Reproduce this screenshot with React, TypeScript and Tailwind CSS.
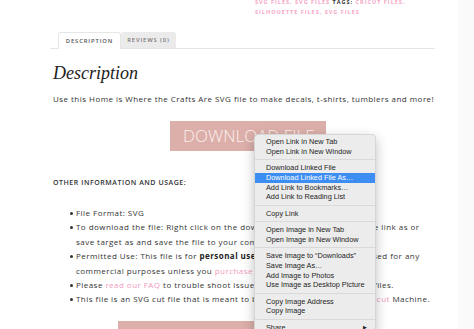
import React from 'react';

const menuItems: (string | null)[] = [
  'Open Link in New Tab',
  'Open Link in New Window',
  null,
  'Download Linked File',
  'Download Linked File As…',
  'Add Link to Bookmarks…',
  'Add Link to Reading List',
  null,
  'Copy Link',
  null,
  'Open Image in New Tab',
  'Open Image in New Window',
  null,
  'Save Image to “Downloads”',
  'Save Image As…',
  'Add Image to Photos',
  'Use Image as Desktop Picture',
  null,
  'Copy Image Address',
  'Copy Image',
  null,
  'Share',
];

const Bullet: React.FC<{ children: React.ReactNode }> = ({ children }) => (
  <li className="flex">
    <span className="w-[23px] shrink-0 flex justify-end pr-[3px] pt-[6px]">
      <span className="w-[3px] h-[3px] rounded-full bg-[#333]" />
    </span>
    <span className="whitespace-nowrap">{children}</span>
  </li>
);

const ContextMenu: React.FC = () => (
  <div className="absolute left-[254px] top-[134px] w-[122px] pt-[2px] pb-[4px] rounded-[4px] bg-[#ececec] border border-[#d6d6d6] shadow-[0_4px_12px_rgba(0,0,0,0.25)] font-['Liberation_Sans',Arial,sans-serif] text-[7.3px] text-[#1e1e1e]">
    {menuItems.map((item, i) =>
      item === null ? (
        <div key={i} className="my-[2.8px] h-px bg-[#d9d9d9]" />
      ) : (
        <div
          key={i}
          className={
            'h-[9.75px] leading-[9.75px] pl-[11px] pr-[8px] flex justify-between whitespace-nowrap ' +
            (item === 'Download Linked File As…' ? 'bg-[#3d8ef2] text-white' : '')
          }
        >
          <span>{item}</span>
          {item === 'Share' && <span className="text-[5px]">▶</span>}
        </div>
      )
    )}
  </div>
);

export default function App() {
  return (
    <div className="relative flex w-[474px] h-[329px] overflow-hidden bg-white text-[#333] font-['Open_Sans',sans-serif]">
      <div className="w-[458px] shrink-0 pl-[50px]">
        <div className="ml-[205px] -mt-[3px] text-[5.5px] font-bold tracking-[1px] leading-[10px] uppercase text-[#f4a6c6]">
          <div>
            SVG Files, SVG Files <span className="text-[#333]">Tags:</span> Cricut Files,
          </div>
          <div>Silhouette Files, SVG Files</div>
        </div>

        <div className="mt-[15px] w-[385px] h-[17px] flex items-end pl-[8px] border-b border-[#e6e6e6] text-[5.8px] font-semibold tracking-[0.9px] uppercase">
          <div className="h-[17px] -mb-px w-[63px] flex items-center justify-center bg-white border border-b-0 border-[#e6e6e6] rounded-t-[3px] text-[#555]">
            Description
          </div>
          <div className="h-[16px] w-[55px] flex items-center justify-center bg-[#ebebeb] rounded-t-[3px] text-[#777]">
            Reviews (0)
          </div>
        </div>

        <div className="pl-[3px]">
          <h2 className="mt-[15px] text-[18px] leading-[18px] italic font-['Liberation_Serif',serif] text-[#222]">
            Description
          </h2>

          <p className="mt-[10px] text-[8px] leading-[14px] font-medium tracking-[0.46px] whitespace-nowrap">
            Use this Home is Where the Crafts Are SVG file to make decals, t-shirts, tumblers and more!
          </p>

          <div className="mt-[15px] ml-[117px] w-[156px] h-[30px] bg-[#dcafaa] flex items-center pl-[13px] text-[17px] font-light text-[#fbefee] whitespace-nowrap">
            DOWNLOAD FILE
          </div>

          <p className="mt-[25px] text-[7px] leading-[14px] font-semibold tracking-[0.55px] uppercase">
            Other information and usage:
          </p>

          <ul className="mt-[16px] text-[8px] leading-[14.4px] font-medium tracking-[0.46px]">
            <Bullet>File Format: SVG</Bullet>
            <Bullet>
              To download the file: Right click on the download button above, save the link as or
              <br />
              save target as and save the file to your computer.
            </Bullet>
            <Bullet>
              Permitted Use: This file is for <b className="font-bold text-[#222]">personal use only</b>, and it may never be used for any
              <br />
              commercial purposes unless you <span className="text-[#f29ac0]">purchase a commercial license</span>.
            </Bullet>
            <Bullet>
              Please <span className="text-[#f29ac0]">read our FAQ</span> to trouble shoot issues with downloading or using files.
            </Bullet>
            <Bullet>
              This file is an SVG cut file that is meant to be used with a Cameo or a <span className="text-[#f29ac0]">Cricut</span> Machine.
            </Bullet>
          </ul>

          <div className="mt-[14px] ml-[65px] w-[258px] h-[30px] bg-[#dcafaa]" />
        </div>
      </div>
      <div className="flex-1 bg-[#fafafa]" />

      <ContextMenu />
    </div>
  );
}
